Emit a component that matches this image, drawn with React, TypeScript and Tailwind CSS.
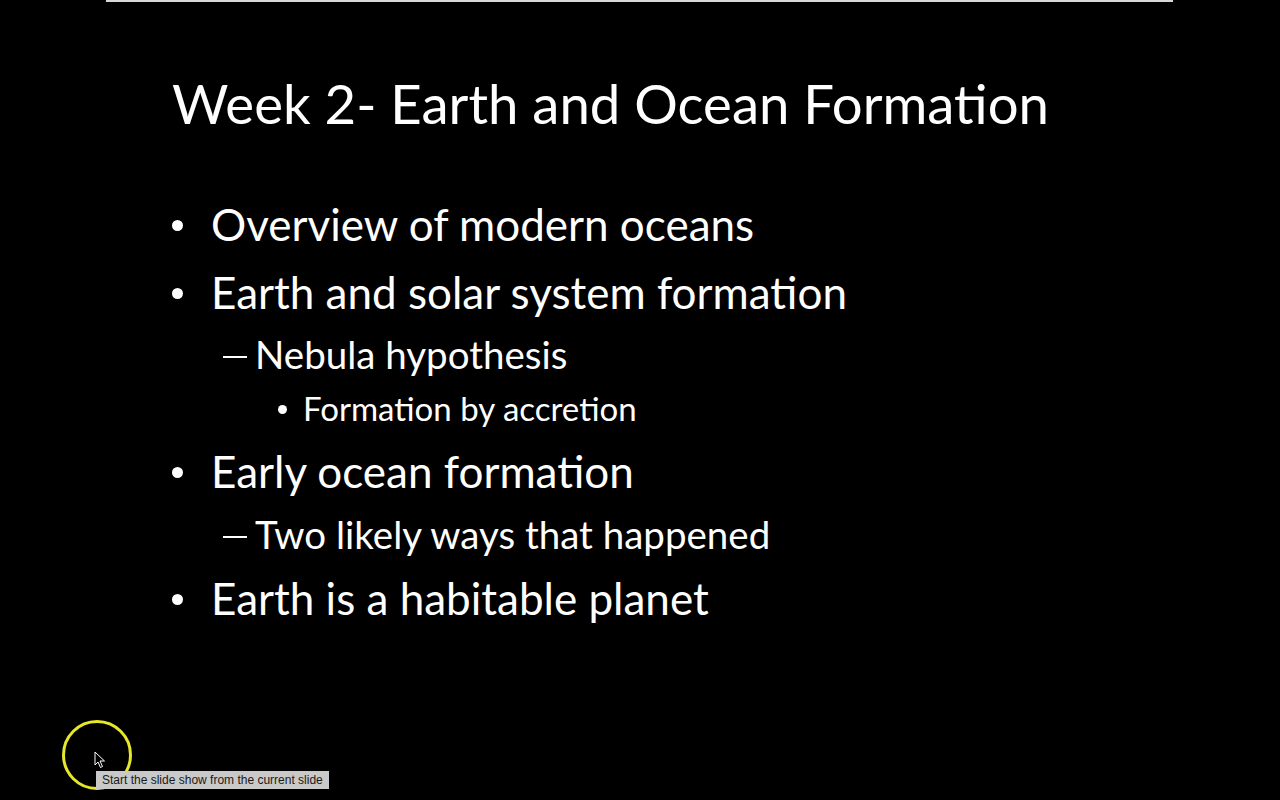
import React from "react";

type Item = { level: 1 | 2 | 3; text: string; h: string };

const items: Item[] = [
  { level: 1, text: "Overview of modern oceans", h: "h-[68px]" },
  { level: 1, text: "Earth and solar system formation", h: "h-[67px]" },
  { level: 2, text: "Nebula hypothesis", h: "h-[58px]" },
  { level: 3, text: "Formation by accretion", h: "h-[50px]" },
  { level: 1, text: "Early ocean formation", h: "h-[76px]" },
  { level: 2, text: "Two likely ways that happened", h: "h-[51px]" },
  { level: 1, text: "Earth is a habitable planet", h: "h-[76px]" },
];

function Bullet({ item }: { item: Item }) {
  if (item.level === 1) {
    return (
      <div className={`flex ${item.h} items-center text-[44px] leading-none`}>
        <span className="flex w-[39px] items-center">
          <span className="mt-[3px] inline-block h-[11px] w-[11px] rounded-full bg-white" />
        </span>
        <span>{item.text}</span>
      </div>
    );
  }
  if (item.level === 2) {
    return (
      <div className={`flex ${item.h} items-center pl-[51px] text-[38.5px] leading-none`}>
        <span className="mr-[8px] mt-[5px] inline-block h-[2px] w-[24px] bg-white" />
        <span>{item.text}</span>
      </div>
    );
  }
  return (
    <div className={`flex ${item.h} items-center pl-[106px] text-[33px] leading-none`}>
      <span className="flex w-[25px] items-center">
        <span className="mt-[2px] inline-block h-[9px] w-[9px] rounded-full bg-white" />
      </span>
      <span>{item.text}</span>
    </div>
  );
}

export default function App() {
  return (
    <div
      className="relative h-[800px] w-full overflow-hidden bg-black text-white"
      style={{ fontFamily: "Lato, 'Open Sans', sans-serif" }}
    >
      <div className="ml-[106px] h-[800px] w-[1067px] border-t-2 border-[#d8d8d8]">
        <div className="pl-[66px] pt-[67px]">
          <h1 className="h-[68px] text-[54.5px] font-normal leading-[68px]">
            Week 2- Earth and Ocean Formation
          </h1>
          <div className="mt-[53px] flex flex-col">
            {items.map((it, i) => (
              <Bullet key={i} item={it} />
            ))}
          </div>
        </div>
      </div>

      {/* pointer highlight */}
      <div className="absolute left-[62px] top-[720px] h-[70px] w-[70px] rounded-full border-[3px] border-[#e6e62a]" />
      <svg className="absolute left-[94px] top-[751px]" width="12" height="18" viewBox="0 0 12 18">
        <path d="M1 1 L1 14 L4 11 L6.5 16.5 L8.5 15.5 L6 10 L10.5 10 Z" fill="#000" stroke="#fff" strokeWidth="1" />
      </svg>
      <div
        className="absolute left-[96px] top-[771px] bg-[#c9c9c9] px-[6px] py-[2px] text-[12px] leading-[14px] text-[#1a1a1a]"
        style={{ fontFamily: "'Liberation Sans', Arial, sans-serif" }}
      >
        Start the slide show from the current slide
      </div>
    </div>
  );
}
